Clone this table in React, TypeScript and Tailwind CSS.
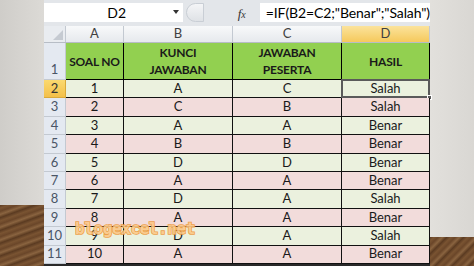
import React from "react";

const rows: [string, string, string, string][] = [
  ["1", "A", "C", "Salah"],
  ["2", "C", "B", "Salah"],
  ["3", "A", "A", "Benar"],
  ["4", "B", "B", "Benar"],
  ["5", "D", "D", "Benar"],
  ["6", "A", "A", "Benar"],
  ["7", "D", "A", "Salah"],
  ["8", "A", "A", "Benar"],
  ["9", "D", "A", "Salah"],
  ["10", "A", "A", "Benar"],
];

const font = "font-['Lato','Open_Sans',sans-serif]";

export default function App() {
  return (
    <div className={`w-[474px] h-[266px] flex overflow-hidden bg-[#d8d6d2] ${font}`}>
      {/* left wall + floor */}
      <div className="w-[44px] flex flex-col">
        <div className="flex-1 bg-[linear-gradient(90deg,#cfcdc9,#dcdad6)]" />
        <div className="h-[61px] bg-[repeating-linear-gradient(160deg,#5b3b22_0px,#7a5432_3px,#6a4629_6px,#8a6440_9px,#5a3a20_12px)]" />
      </div>

      {/* sheet */}
      <div className="w-[386px] flex flex-col relative bg-white">
        {/* formula bar */}
        <div className="h-[26px] bg-[#e3e6ea] flex items-start pt-[3px]">
          <div className="w-[146px] h-[19px] bg-white flex items-center relative">
            <span className="flex-1 text-center text-[14px] text-black pl-[6px]">D2</span>
            <span className="absolute right-[4px] top-[7px] w-0 h-0 border-l-[3.5px] border-r-[3.5px] border-t-[4px] border-l-transparent border-r-transparent border-t-[#333]" />
          </div>
          <div className="w-[80px] h-[19px] flex items-center relative">
            <div className="ml-[3px] w-[18px] h-[19px] rounded-l-full bg-[linear-gradient(180deg,#f4f5f7,#dfe2e6)] border border-[#c9ced5]" />
            <span className="absolute right-[14px] top-[1px] text-[13px] italic font-['Liberation_Serif',serif] text-[#333]">
              f<span className="text-[10px]">x</span>
            </span>
          </div>
          <div className="flex-1 h-[19px] bg-white flex items-center pl-[6px]">
            <span className="text-[14px] text-black whitespace-nowrap tracking-[-0.1px]">=IF(B2=C2;"Benar";"Salah")</span>
          </div>
        </div>

        {/* column headers */}
        <div className="h-[17px] flex border-b border-[#b7bdc6] text-[13px] text-[#404040]">
          <div className="w-[22px] bg-[#e9ecf0] border-r border-[#c3c9d1] relative">
            <span className="absolute right-[2px] bottom-[2px] w-0 h-0 [border-bottom:10px_solid_#c5cad1] [border-left:10px_solid_transparent]" />
          </div>
          <div className="w-[58px] flex items-center justify-center bg-[linear-gradient(180deg,#f8f9fa,#e6e9ed)] border-r border-[#c3c9d1]">A</div>
          <div className="w-[109px] flex items-center justify-center bg-[linear-gradient(180deg,#f8f9fa,#e6e9ed)] border-r border-[#c3c9d1]">B</div>
          <div className="w-[109px] flex items-center justify-center bg-[linear-gradient(180deg,#f8f9fa,#e6e9ed)] border-r border-[#c3c9d1]">C</div>
          <div className="w-[88px] flex items-center justify-center bg-[linear-gradient(180deg,#fbe39c,#f5c95c)] border-r border-[#c3c9d1]">D</div>
        </div>

        {/* header row 1 */}
        <div className="h-[37px] flex text-[12px] font-bold text-[#1a1a1a] leading-[17px] tracking-[-0.2px]">
          <div className="w-[22px] bg-[#e4e9f1] border-r border-b border-[#c3c9d1] flex items-end justify-center pb-[1px] font-normal text-[13px] text-[#4a5566]">1</div>
          <div className="w-[58px] bg-[#92d050] border-r border-b border-black flex items-center justify-center whitespace-nowrap">SOAL NO</div>
          <div className="w-[109px] bg-[#92d050] border-r border-b border-black flex flex-col items-center justify-center">
            <span>KUNCI</span>
            <span>JAWABAN</span>
          </div>
          <div className="w-[109px] bg-[#92d050] border-r border-b border-black flex flex-col items-center justify-center">
            <span>JAWABAN</span>
            <span>PESERTA</span>
          </div>
          <div className="w-[88px] bg-[#92d050] border-r border-b border-black flex items-center justify-center">HASIL</div>
        </div>

        {/* data rows */}
        {rows.map((r, i) => {
          const bg = i % 2 === 0 ? "bg-[#ebf1de]" : "bg-[#f2dcdb]";
          const sel = i === 0;
          return (
            <div key={i} className="h-[18.4px] flex text-[13px] text-[#1a1a1a]">
              <div
                className={`w-[22px] border-r border-b flex items-center justify-center ${
                  sel
                    ? "bg-[linear-gradient(180deg,#fbd970,#f3c04a)] border-[#d9a93a] text-[#333]"
                    : "bg-[#e4e9f1] border-[#c3c9d1] text-[#4a5566]"
                }`}
              >
                {i + 2}
              </div>
              <div className={`w-[58px] ${bg} border-r border-b-[1.5px] border-[#111] flex items-center justify-center`}>{r[0]}</div>
              <div className={`w-[109px] ${bg} border-r border-b-[1.5px] border-[#111] flex items-center justify-center`}>{r[1]}</div>
              <div className={`w-[109px] ${bg} border-r border-b-[1.5px] border-[#111] flex items-center justify-center`}>{r[2]}</div>
              <div className={`w-[88px] ${bg} border-r border-b-[1.5px] border-[#111] flex items-center justify-center relative`}>
                {r[3]}
                {sel && (
                  <>
                    <span className="absolute inset-[-1px] border-2 border-[#5a5a5a]" />
                    <span className="absolute right-[-3px] bottom-[-3px] w-[5px] h-[5px] bg-[#5a5a5a] border border-white" />
                  </>
                )}
              </div>
            </div>
          );
        })}
        <div className="flex-1 bg-[#2a2a2a]" />

        {/* watermark */}
        <span className="absolute left-[31px] top-[219px] text-[16px] leading-[20px] font-bold font-['DejaVu_Sans_Mono',monospace] text-[#fbc889] [-webkit-text-stroke:1.6px_#ee9a3c] [paint-order:stroke_fill] tracking-[-0.4px] opacity-90">
          blogexcel.net
        </span>
      </div>

      {/* right wall + floor */}
      <div className="w-[44px] flex flex-col">
        <div className="flex-1 bg-[linear-gradient(90deg,#e2e0dc,#d9d7d3)]" />
        <div className="h-[29px] bg-[repeating-linear-gradient(135deg,#5b3b22_0px,#7a5432_3px,#6a4629_6px,#8a6440_9px,#5a3a20_12px)]" />
      </div>
    </div>
  );
}
